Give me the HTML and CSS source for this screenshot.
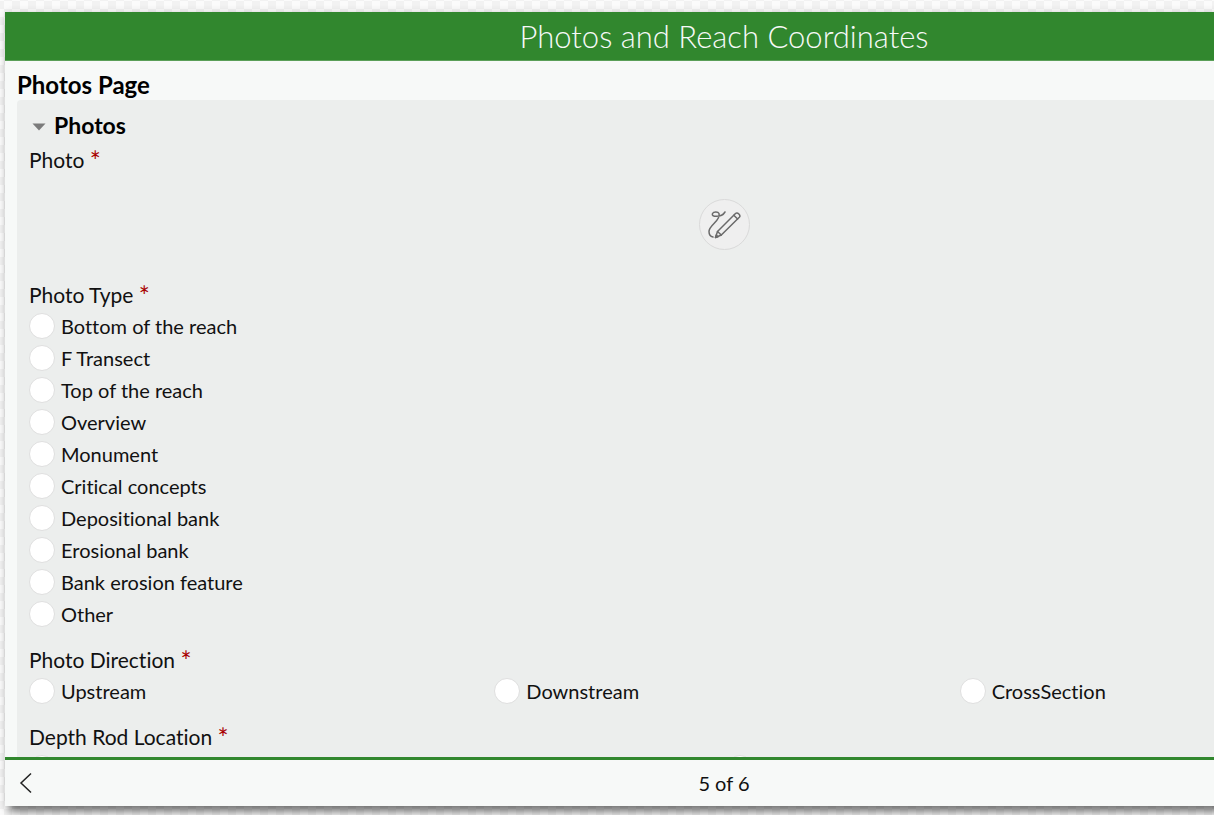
FILE: index.html
```html
<!DOCTYPE html>
<html lang="en">
<head>
<meta charset="utf-8">
<title>Photos and Reach Coordinates</title>
<link rel="stylesheet" href="styles.css">
</head>
<body>
<form class="form">
  <header class="form-header"><h1 class="form-title">Photos and Reach Coordinates</h1></header>
  <main class="form-body">
    <h2 class="page-label">Photos Page</h2>
    <section class="group">
      <h3 class="group-heading">
        <button class="group-toggle" type="button" aria-expanded="true">
          <svg class="caret" width="14" height="8" viewBox="0 0 14 8" aria-hidden="true"><path d="M0.500 0.500H13.500L7 7.500Z" fill="#7b7b7b"/></svg>
          Photos
        </button>
      </h3>
      <div class="question">
        <label class="question-label" for="draw">Photo <span class="required">*</span></label>
        <div class="photo-area">
          <button class="draw-button" id="draw" type="button" aria-label="Draw photo">
            <svg width="34" height="30" viewBox="0 0 34 30" fill="none" stroke="#6a6a6a" stroke-width="1.500" stroke-linecap="round" stroke-linejoin="round" aria-hidden="true">
              <path d="M18 2C16.500 4.500 13.500 6.300 9.500 6.300C6 6.300 4.800 5.200 5.500 3.500C6.500 1.600 11 1.300 12 3.500C13.200 7 10.500 10 7 13.500C4 16.500 2 18.500 2 21.500C2 24.500 3.500 26.500 6 27"/>
              <path d="M8.500 27.500L10.500 21.500L28.500 3.500C30.500 1.700 34.200 5.200 32.300 7.300L14.300 25Z"/>
              <path d="M10.500 21.500L14.300 25M26.800 5.200L30.600 9"/>
              <path d="M8.500 27.500L9.300 24.900L11 26.700Z" fill="#6a6a6a"/>
            </svg>
          </button>
        </div>
      </div>
      <fieldset class="question">
        <legend class="question-label">Photo Type <span class="required">*</span></legend>
        <div class="options">
          <label class="option"><input type="radio" name="type">Bottom of the reach</label>
          <label class="option"><input type="radio" name="type">F Transect</label>
          <label class="option"><input type="radio" name="type">Top of the reach</label>
          <label class="option"><input type="radio" name="type">Overview</label>
          <label class="option"><input type="radio" name="type">Monument</label>
          <label class="option"><input type="radio" name="type">Critical concepts</label>
          <label class="option"><input type="radio" name="type">Depositional bank</label>
          <label class="option"><input type="radio" name="type">Erosional bank</label>
          <label class="option"><input type="radio" name="type">Bank erosion feature</label>
          <label class="option"><input type="radio" name="type">Other</label>
        </div>
      </fieldset>
      <fieldset class="question">
        <legend class="question-label">Photo Direction <span class="required">*</span></legend>
        <div class="options options-three">
          <label class="option"><input type="radio" name="direction">Upstream</label>
          <label class="option"><input type="radio" name="direction">Downstream</label>
          <label class="option"><input type="radio" name="direction">CrossSection</label>
        </div>
      </fieldset>
      <fieldset class="question">
        <legend class="question-label">Depth Rod Location <span class="required">*</span></legend>
        <div class="options options-two">
          <label class="option"><input type="radio" name="rod"></label>
          <label class="option"><input type="radio" name="rod"></label>
        </div>
      </fieldset>
    </section>
  </main>
  <footer class="form-footer">
    <button class="back" type="button" aria-label="Previous page">
      <svg width="14" height="22" viewBox="0 0 14 22" fill="none" stroke="#222" stroke-width="1.500" aria-hidden="true"><path d="M12 1.500L2 11L12 20.500"/></svg>
    </button>
    <span class="page-count">5 of 6</span>
  </footer>
</form>
</body>
</html>
```
FILE: styles.css
```css
* { box-sizing: border-box; }

body {
  margin: 0;
  height: 100vh;
  padding: 12px 0 9px 5px;
  overflow: hidden;
  display: flex;
  font-family: Lato, sans-serif;
  font-size: 20px;
  font-variant-ligatures: none;
  color: #111;
  background: repeating-conic-gradient(#f2f2f2 0 25%, #fbfbfb 0 50%) 4px 1px / 16px 16px;
}

button {
  font: inherit;
  color: inherit;
  border: 0;
  background: none;
  padding: 0;
}

/* The sheet is wider than the window and runs off its right side. */
.form {
  flex: 1 0 auto;
  width: calc(100% + 229px);
  display: flex;
  flex-direction: column;
  background: #f7f9f8;
  box-shadow: 4px 6px 8px rgba(0, 0, 0, 0.5), 0 0 8px rgba(0, 0, 0, 0.1);
}

.form-header {
  background: #31872e;
  border-bottom: 1px solid #5a9f58;
  color: #f7f9f8;
  text-align: center;
}

.form-title {
  margin: 0;
  font-size: 31px;
  line-height: 48px;
  font-weight: 300;
}

.form-body {
  flex: 1;
  min-height: 0;
  overflow: hidden;
  padding: 9px 12px 0;
}

.page-label {
  margin: 0;
  font-size: 24px;
  line-height: 30px;
  font-weight: 700;
  color: #000;
}

.group {
  padding: 5px 12px;
  background: #eceeed;
  border-radius: 4px;
}

.group-heading {
  margin: 0;
  font-size: 23px;
  font-weight: 700;
  color: #000;
}

.group-toggle {
  display: flex;
  align-items: center;
  gap: 8px;
  height: 40px;
  padding-left: 3px;
}

.caret { margin-top: 3px; }

.question {
  margin: 0 0 15px;
  padding: 0;
  border: 0;
  min-width: 0;
}

.question-label {
  display: block;
  padding: 0;
  font-size: 21px;
  line-height: 30px;
}

.required {
  font-size: 26px;
  line-height: 20px;
  vertical-align: -3px;
  color: #a80000;
}

.photo-area {
  display: flex;
  justify-content: center;
  padding: 24px 0 15px;
}

.draw-button {
  width: 51px;
  height: 51px;
  display: flex;
  align-items: center;
  justify-content: center;
  border: 1px solid #dadada;
  border-radius: 50%;
  background: #efefef;
}

.options {
  display: grid;
  column-gap: 6px;
}

.options-two { grid-template-columns: repeat(2, 1fr); }
.options-three { grid-template-columns: repeat(3, 1fr); }

.option {
  display: flex;
  align-items: center;
  gap: 6px;
  height: 32px;
}

.option input {
  appearance: none;
  width: 26px;
  height: 26px;
  margin: 0;
  border: 1px solid #dfdfdf;
  border-radius: 50%;
  background: #fff;
}

.form-footer {
  display: grid;
  grid-template-columns: 1fr auto 1fr;
  align-items: center;
  height: 49px;
  padding: 0 12px;
  border-top: 3px solid #31872e;
}

.back {
  display: flex;
  justify-self: start;
  padding: 4px 2px;
}
```
